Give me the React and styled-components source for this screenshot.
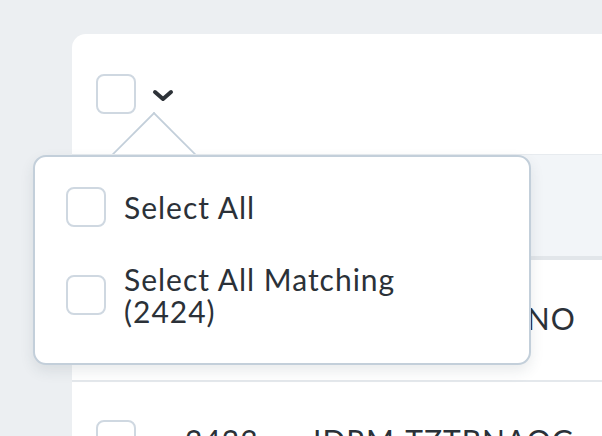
import React from "react";
import styled, { createGlobalStyle } from "styled-components";

const Global = createGlobalStyle`
  html, body { margin: 0; padding: 0; background: #eceff2; overflow: hidden; }
  body { font-family: Lato, "Noto Sans", "DejaVu Sans", sans-serif; color: #2b3138; }
  * { box-sizing: border-box; }
`;

const Page = styled.div`
  padding: 34px 0 0 72px;
  width: 602px;
  height: 436px;
  overflow: hidden;
`;

const Card = styled.div`
  width: 530px;
  background: #ffffff;
  border-top-left-radius: 14px;
`;

const Toolbar = styled.div`
  position: relative;
  height: 120px;
  padding-left: 24px;
  display: flex;
  align-items: center;
  gap: 16px;
`;

const Box = styled.span`
  display: inline-block;
  flex: none;
  width: 40px;
  height: 40px;
  border: 2px solid #cfd8e1;
  border-radius: 8px;
  background: #fff;
`;

const Chevron = styled.svg`
  width: 22px;
  height: 13px;
  margin-top: 2px;
`;

const HeaderRow = styled.div`
  height: 106px;
  background: #f2f5f8;
  border-top: 1px solid #e7ebef;
  border-bottom: 4px solid #e2e6ea;
`;

const Row = styled.div`
  height: 122px;
  padding: 0 0 4px 24px;
  display: grid;
  grid-template-columns: 89px 128px auto;
  align-items: center;
  border-bottom: 2px solid #e4e8ec;
  font-size: 30px;
  letter-spacing: 1px;
  white-space: nowrap;
  overflow: hidden;
`;

const Cell = styled.span`
  color: #2b3138;
`;

const Popover = styled.div`
  position: absolute;
  left: -39px;
  top: 121px;
  width: 498px;
  height: 210px;
  background: #fff;
  border: 2px solid #c3cfda;
  border-radius: 13px;
  box-shadow: 0 6px 14px rgba(40, 55, 70, 0.1);
  padding: 30px 0 0 31px;
  display: flex;
  flex-direction: column;
  gap: 36px;
  z-index: 5;
`;

const Arrow = styled.span`
  position: absolute;
  left: 89px;
  top: -33px;
  width: 60px;
  height: 60px;
  background: #fff;
  border-top: 2px solid #c3cfda;
  border-left: 2px solid #c3cfda;
  transform: rotate(45deg);
  clip-path: polygon(0 0, 100% 0, 0 100%);
`;

const Option = styled.label`
  display: flex;
  align-items: center;
  gap: 18px;
  font-size: 30px;
  letter-spacing: 1px;
  line-height: 32px;
  color: #2b3138;
`;

const OptionText = styled.span`
  max-width: 320px;
`;

export default function App() {
  return (
    <>
      <Global />
      <Page>
        <Card>
          <Toolbar>
            <Box />
            <Chevron viewBox="0 0 22 13">
              <polyline
                points="3,3 11,10 19,3"
                fill="none"
                stroke="#2d3238"
                strokeWidth="4"
                strokeLinecap="round"
                strokeLinejoin="round"
              />
            </Chevron>
            <Popover>
              <Arrow />
              <Option>
                <Box />
                <OptionText>Select All</OptionText>
              </Option>
              <Option>
                <Box />
                <OptionText>Select All Matching (2424)</OptionText>
              </Option>
            </Popover>
          </Toolbar>
          <HeaderRow />
          <Row>
            <Box />
            <Cell>2424</Cell>
            <Cell>IDRM-HXZKPLNO</Cell>
          </Row>
          <Row>
            <Box />
            <Cell>2423</Cell>
            <Cell>IDRM-TZTBNAQG</Cell>
          </Row>
        </Card>
      </Page>
    </>
  );
}
